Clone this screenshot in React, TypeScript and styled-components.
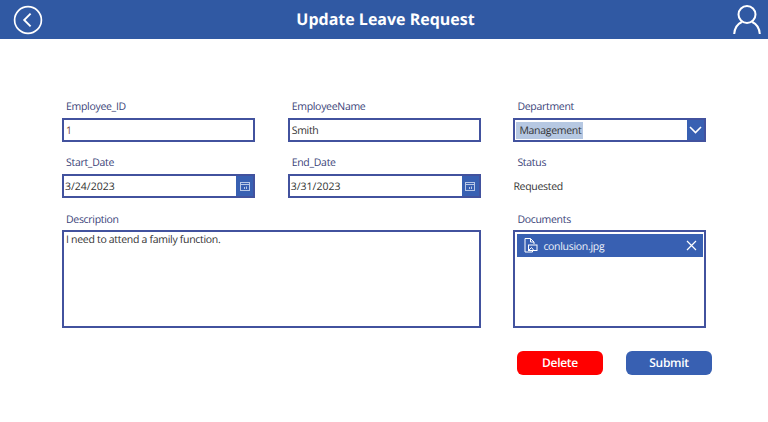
import { createGlobalStyle, styled } from 'styled-components';

const BLUE = '#3059a3';
const ACCENT = '#3860b2';
const BORDER = '#42529e';

const GlobalStyle = createGlobalStyle`
  html, body {
    margin: 0;
    padding: 0;
    background: #fff;
    font-family: "Open Sans", "Liberation Sans", sans-serif;
  }
`;

const BackIcon = () => (
  <svg width="30" height="30" viewBox="0 0 30 30" fill="none" stroke="#fff">
    <circle cx="15" cy="15" r="13.4" strokeWidth="1.7" />
    <path d="M17.6 8.6 L11.2 15 L17.6 21.4" strokeWidth="1.9" />
  </svg>
);

const UserIcon = () => (
  <svg width="28" height="31" viewBox="0 0 28 31" fill="none" stroke="#fff" strokeWidth="2">
    <circle cx="14" cy="10.5" r="8.5" />
    <path d="M1.2 30 C1.6 23.5 5 19.8 8.8 18 M26.8 30 C26.4 23.5 23 19.8 19.2 18" />
  </svg>
);

const CalendarIcon = () => (
  <svg width="10" height="9" viewBox="0 0 10 9" fill="none" stroke="#b9c8e6" strokeWidth="1">
    <rect x="0.5" y="0.5" width="9" height="8" />
    <path d="M0.5 2.5 H9.5" />
    <path d="M4.5 7 V5 M6.5 7 V4.5" />
  </svg>
);

const ChevronIcon = () => (
  <svg width="13" height="8" viewBox="0 0 13 8" fill="none" stroke="#fff" strokeWidth="1.6">
    <path d="M1 1 L6.5 6.5 L12 1" />
  </svg>
);

const FileIcon = () => (
  <svg width="14" height="15" viewBox="0 0 14 15" fill="none" stroke="#fff" strokeWidth="1">
    <path d="M8.5 12.5 V14 H1 V0.5 H6.5 L10 4 V6 M6.5 0.5 V4 H10" />
    <rect x="4.5" y="7" width="8.5" height="5.5" />
    <path d="M5 12 L7.5 9.5 L9.5 12" />
  </svg>
);

const CloseIcon = () => (
  <svg width="11" height="11" viewBox="0 0 11 11" fill="none" stroke="#fff" strokeWidth="1.2">
    <path d="M1 1 L10 10 M10 1 L1 10" />
  </svg>
);

export default function App() {
  return (
    <>
      <GlobalStyle />
      <Page>
        <Header>
          <BackButton>
            <BackIcon />
          </BackButton>
          <Title>Update Leave Request</Title>
          <UserButton>
            <UserIcon />
          </UserButton>
        </Header>
        <Form>
          <Field>
            <Label>Employee_ID</Label>
            <InputBox>
              <Value $color="#7a4a44">1</Value>
            </InputBox>
          </Field>
          <Field>
            <Label>EmployeeName</Label>
            <InputBox>
              <Value>Smith</Value>
            </InputBox>
          </Field>
          <Field>
            <Label>Department</Label>
            <InputBox>
              <Selected>Management</Selected>
              <SideButton>
                <ChevronIcon />
              </SideButton>
            </InputBox>
          </Field>
          <Field>
            <Label>Start_Date</Label>
            <InputBox>
              <DateValue>3/24/2023</DateValue>
              <SideButton>
                <CalendarIcon />
              </SideButton>
            </InputBox>
          </Field>
          <Field>
            <Label>End_Date</Label>
            <InputBox>
              <DateValue>3/31/2023</DateValue>
              <SideButton>
                <CalendarIcon />
              </SideButton>
            </InputBox>
          </Field>
          <Field>
            <Label>Status</Label>
            <StatusText>Requested</StatusText>
          </Field>
          <DescriptionField>
            <LowLabel>Description</LowLabel>
            <TextArea>I need to attend a family function.</TextArea>
          </DescriptionField>
          <Field>
            <LowLabel>Documents</LowLabel>
            <Attachments>
              <Attachment>
                <FileIcon />
                <FileName>conlusion.jpg</FileName>
                <CloseIcon />
              </Attachment>
            </Attachments>
          </Field>
        </Form>
        <Actions>
          <ActionButton $color="#ff0000">Delete</ActionButton>
          <ActionButton $color={ACCENT}>Submit</ActionButton>
        </Actions>
      </Page>
    </>
  );
}

const Page = styled.div`
  width: 768px;
  height: 422px;
  overflow: hidden;
  background: #fff;
  text-rendering: geometricPrecision;
`;

const Header = styled.header`
  height: 39px;
  background: ${BLUE};
  display: flex;
  align-items: center;
  justify-content: space-between;
  padding: 0 7px 0 13px;
  box-sizing: border-box;
`;

const BackButton = styled.div`
  display: flex;
  width: 30px;
  height: 30px;
`;

const UserButton = styled.div`
  display: flex;
  width: 28px;
  height: 31px;
`;

const Title = styled.h1`
  margin: 0 0 2px;
  padding: 0 5px 0 0;
  color: #fff;
  font-size: 16px;
  font-weight: 700;
  line-height: 22px;
`;

const Form = styled.div`
  display: grid;
  grid-template-columns: repeat(3, 193px);
  grid-auto-rows: min-content;
  column-gap: 32.7px;
  row-gap: 14px;
  padding: 61px 0 0 62px;
  font-size: 10.5px;
  letter-spacing: -0.3px;
`;

const Field = styled.div`
  display: flex;
  flex-direction: column;
`;

const DescriptionField = styled(Field)`
  grid-column: span 2;
`;

const Label = styled.label`
  height: 18px;
  padding-left: 4px;
  line-height: 15px;
  color: #3a3f78;
`;

const LowLabel = styled(Label)`
  height: 17px;
  padding-top: 1px;
`;

const InputBox = styled.div`
  height: 24px;
  box-sizing: border-box;
  border: 2px solid ${BORDER};
  display: flex;
  align-items: center;
  background: #fff;
`;

const Value = styled.span<{ $color?: string }>`
  flex: 1;
  padding: 2px 0 0 2px;
  color: ${({ $color }) => $color ?? '#333'};
`;

const DateValue = styled(Value)`
  padding-left: 1px;
  letter-spacing: 0;
`;

const Selected = styled.span`
  margin: 0 auto 0 1px;
  padding: 0 2px 0 3px;
  height: 17px;
  line-height: 19px;
  color: #333;
  background: #b6c8e2;
`;

const SideButton = styled.div`
  width: 17px;
  align-self: stretch;
  background: ${ACCENT};
  display: flex;
  align-items: center;
  justify-content: center;
`;

const StatusText = styled.div`
  height: 24px;
  line-height: 26px;
  color: #333;
`;

const TextArea = styled.div`
  height: 98px;
  box-sizing: border-box;
  border: 2px solid ${BORDER};
  padding: 1px 2px 0;
  line-height: 15px;
  color: #333;
`;

const Attachments = styled.div`
  height: 98px;
  box-sizing: border-box;
  border: 2px solid ${BORDER};
  padding: 2px 1px 2px 2px;
`;

const Attachment = styled.div`
  height: 23px;
  background: ${ACCENT};
  display: flex;
  align-items: center;
  gap: 5px;
  padding: 0 6px 0 7px;
  color: #fff;
`;

const FileName = styled.span`
  flex: 1;
  padding-top: 2px;
  color: #eef2fa;
`;

const Actions = styled.div`
  display: flex;
  gap: 23px;
  padding: 23px 0 0 517px;
`;

const ActionButton = styled.div<{ $color: string }>`
  width: 86px;
  height: 24px;
  border-radius: 6px;
  background: ${({ $color }) => $color};
  color: #fff;
  font-size: 12px;
  font-weight: 600;
  letter-spacing: -0.3px;
  line-height: 24px;
  text-align: center;
`;
